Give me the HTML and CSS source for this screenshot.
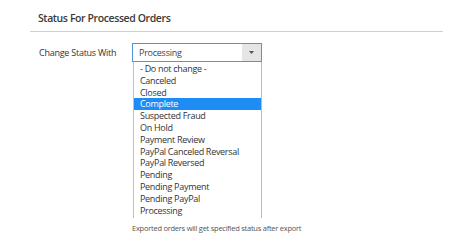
FILE: index.html
```html
<!DOCTYPE html>
<html>
<head>
<meta charset="utf-8">
<link rel="stylesheet" href="styles.css">
</head>
<body>
<div class="page">
  <h2 class="title">Status For Processed Orders</h2>
  <div class="rule"></div>
  <div class="row">
    <div class="label">Change Status With</div>
    <div class="control">
      <div class="select">
        <span class="value">Processing</span>
        <span class="arrow"><svg width="5" height="3" viewBox="0 0 5 3"><path d="M0 0H5L2.5 3Z" fill="#555"/></svg></span>
      </div>
      <ul class="list">
        <li>- Do not change -</li>
        <li>Canceled</li>
        <li>Closed</li>
        <li class="active">Complete</li>
        <li>Suspected Fraud</li>
        <li>On Hold</li>
        <li>Payment Review</li>
        <li>PayPal Canceled Reversal</li>
        <li>PayPal Reversed</li>
        <li>Pending</li>
        <li>Pending Payment</li>
        <li>Pending PayPal</li>
        <li>Processing</li>
      </ul>
      <p class="note">Exported orders will get specified status after export</p>
    </div>
  </div>
</div>
</body>
</html>
```
FILE: styles.css
```css
html, body {
  margin: 0;
  padding: 0;
  background: #fff;
}
body {
  font-family: "Open Sans", "Liberation Sans", sans-serif;
  color: #333;
}
.page {
  width: 474px;
  height: 249px;
  box-sizing: border-box;
  padding: 11px 31px 0 30px;
}
.title {
  margin: 0 0 0 8px;
  font-size: 10.5px;
  line-height: 14px;
  font-weight: 600;
  letter-spacing: -0.4px;
  color: #3a3a3a;
}
.rule {
  height: 1px;
  background: #d0d0d0;
  margin-top: 6px;
}
.row {
  display: flex;
  margin-top: 11px;
}
.label {
  width: 93px;
  padding-left: 9px;
  font-size: 9px;
  letter-spacing: -0.25px;
  line-height: 19px;
  color: #333;
}
.control {
  width: 130px;
}
.select {
  height: 19px;
  box-sizing: border-box;
  border: 1px solid #4f97d9;
  display: flex;
  align-items: stretch;
}
.value {
  flex: 1;
  padding-left: 6px;
  font-size: 9px;
  letter-spacing: -0.25px;
  line-height: 17px;
  color: #444;
}
.arrow {
  width: 19px;
  background: #e5e5e5;
  display: flex;
  align-items: center;
  justify-content: center;
}
.list {
  list-style: none;
  margin: 0 0 0 1px;
  padding: 1px 0 0;
  width: 129px;
  box-sizing: border-box;
  border-left: 1px solid #b7c3d3;
  border-right: 1px solid #9cc2e6;
  height: 156px;
}
.list li {
  font-size: 9px;
  letter-spacing: -0.3px;
  line-height: 11.8px;
  height: 11.8px;
  padding-left: 6px;
  color: #333;
  white-space: nowrap;
}
.list li.active {
  background: #1e8cf5;
  color: #fff;
}
.note {
  margin: 5px 0 0 0;
  font-size: 7.5px;
  letter-spacing: -0.25px;
  line-height: 10px;
  color: #555;
  white-space: nowrap;
}
```
